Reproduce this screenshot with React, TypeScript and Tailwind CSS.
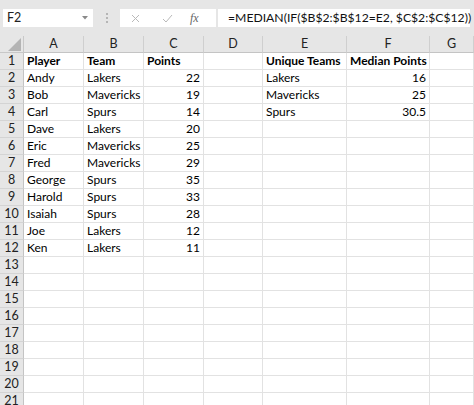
import React from "react";

const data: string[][] = [
  ["Player", "Team", "Points", "", "Unique Teams", "Median Points"],
  ["Andy", "Lakers", "22", "", "Lakers", "16"],
  ["Bob", "Mavericks", "19", "", "Mavericks", "25"],
  ["Carl", "Spurs", "14", "", "Spurs", "30.5"],
  ["Dave", "Lakers", "20", "", "", ""],
  ["Eric", "Mavericks", "25", "", "", ""],
  ["Fred", "Mavericks", "29", "", "", ""],
  ["George", "Spurs", "35", "", "", ""],
  ["Harold", "Spurs", "33", "", "", ""],
  ["Isaiah", "Spurs", "28", "", "", ""],
  ["Joe", "Lakers", "12", "", "", ""],
  ["Ken", "Lakers", "11", "", "", ""],
];

const cols = ["A", "B", "C", "D", "E", "F", "G"];

function isNum(s: string) {
  return s !== "" && !isNaN(Number(s));
}

export default function App() {
  const rows: string[][] = [];
  for (let i = 0; i < 21; i++) {
    rows.push(data[i] ? [...data[i], ""] : ["", "", "", "", "", "", ""]);
  }
  return (
    <div
      className="w-[474px] h-[405px] overflow-hidden bg-white text-black"
      style={{ fontFamily: "Lato, 'Open Sans', sans-serif" }}
    >
      {/* formula bar */}
      <div className="h-[36px] bg-[#e6e6e6] pt-[9px] flex items-start">
        <div className="ml-[3px] w-[90px] h-[18px] bg-white flex items-center justify-between pl-[4px] pr-[5px]">
          <span className="text-[12.5px] text-[#222] leading-none">F2</span>
          <svg width="6" height="4" viewBox="0 0 6 4">
            <path d="M0 0 L6 0 L3 3.5 Z" fill="#8a8a8a" />
          </svg>
        </div>
        <div className="w-[27px] h-[18px] flex flex-col items-center justify-center gap-[2px]">
          <span className="w-[2px] h-[2px] bg-[#b5b5b5]" />
          <span className="w-[2px] h-[2px] bg-[#b5b5b5]" />
          <span className="w-[2px] h-[2px] bg-[#b5b5b5]" />
        </div>
        <div className="w-[96px] h-[18px] bg-white flex items-center">
          <svg className="ml-[11px]" width="9" height="9" viewBox="0 0 9 9">
            <path d="M1 1 L8 8 M8 1 L1 8" stroke="#b9b9b9" strokeWidth="1" />
          </svg>
          <svg className="ml-[22px]" width="11" height="9" viewBox="0 0 11 9">
            <path d="M1 5 L4 8 L10 1" stroke="#b9b9b9" strokeWidth="1" fill="none" />
          </svg>
          <span
            className="ml-[17px] text-[12px] italic text-[#666] leading-none"
            style={{ fontFamily: "'Liberation Serif', serif" }}
          >
            fx
          </span>
        </div>
        <div className="ml-[2px] w-[252px] h-[18px] bg-white flex items-center pl-[10px]">
          <span className="text-[12.2px] text-[#111] leading-none whitespace-nowrap">
            =MEDIAN(IF($B$2:$B$12=E2, $C$2:$C$12))
          </span>
        </div>
      </div>

      {/* grid */}
      <div className="grid grid-cols-[24px_60px_60px_60px_59px_84px_83px_44px] auto-rows-[17px]">
        {/* corner */}
        <div className="bg-[#e6e6e6] border-r border-b border-[#c8c8c8] relative">
          <svg className="absolute left-[8px] top-[2px]" width="13" height="13" viewBox="0 0 13 13">
            <path d="M13 0 L13 13 L0 13 Z" fill="#b4b4b4" />
          </svg>
        </div>
        {cols.map((c) => (
          <div
            key={c}
            className="bg-[#e6e6e6] border-r border-b border-[#cfcfcf] border-b-[#c4c4c4] flex items-center justify-center text-[12.5px] text-[#222]"
          >
            {c}
          </div>
        ))}
        {rows.map((r, ri) => (
          <React.Fragment key={ri}>
            <div className="bg-[#e6e6e6] border-r border-b border-[#d4d4d4] border-r-[#c4c4c4] flex items-center justify-center text-[12.5px] text-[#222]">
              {ri + 1}
            </div>
            {r.map((v, ci) => (
              <div
                key={ci}
                className={`border-r border-b border-[#e2e2e2] flex items-center px-[3px] text-[12px] whitespace-nowrap overflow-visible ${
                  isNum(v) ? "justify-end" : "justify-start"
                } ${ri === 0 ? "font-bold" : ""}`}
              >
                {v}
              </div>
            ))}
          </React.Fragment>
        ))}
      </div>
    </div>
  );
}
